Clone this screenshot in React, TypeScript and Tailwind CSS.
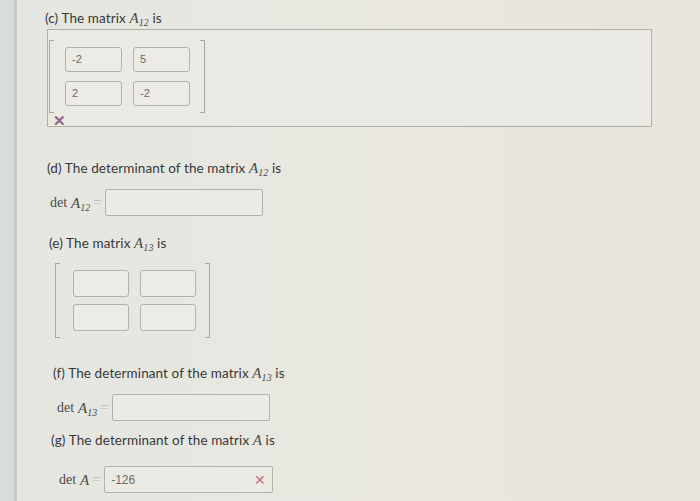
import type { ReactNode } from 'react';

const serif = { fontFamily: '"Liberation Serif", "DejaVu Serif", serif' };

function Sym({ sub }: { sub?: string }) {
  return (
    <span className="whitespace-nowrap" style={serif}>
      <span className="italic text-[15px] text-[#4a4a4a]">A</span>
      {sub && <span className="italic text-[10px] text-[#4a4a4a] relative top-[3px]">{sub}</span>}
    </span>
  );
}

function Prompt({ children, className }: { children: ReactNode; className?: string }) {
  return <div className={'text-[13.5px] leading-4 text-[#383838] tracking-[0.1px] ' + (className ?? '')}>{children}</div>;
}

function Cell({ value, w, h }: { value?: string; w: string; h: string }) {
  return (
    <div className={`${w} ${h} border border-[#b3b2aa] rounded-[3px] bg-[#ecebe5] flex items-center pl-[6px] text-[11px] text-[#6a6a6a]`}
      style={{ fontFamily: '"Liberation Sans", Arial, sans-serif' }}>
      {value}
    </div>
  );
}

function Matrix({ values, cellW, cellH, rowGap, padL, padR, padY }: {
  values: (string | undefined)[];
  cellW: string; cellH: string; rowGap: string; padL: string; padR: string; padY: string;
}) {
  return (
    <div className="flex">
      <div className="w-[5px] border-l border-y border-[#a9a8a1]" />
      <div className={`grid grid-cols-2 gap-x-[11px] ${rowGap} ${padL} ${padR} ${padY}`}>
        {values.map((v, i) => <Cell key={i} value={v} w={cellW} h={cellH} />)}
      </div>
      <div className="w-[5px] border-r border-y border-[#a9a8a1]" />
    </div>
  );
}

function DetRow({ sub, value, wrong, className, inputW, gap }: {
  sub?: string; value?: string; wrong?: boolean; className?: string; inputW: string; gap: string;
}) {
  return (
    <div className={'flex items-center ' + (className ?? '')}>
      <span className="text-[14px] text-[#4a4a4a]" style={serif}>det</span>
      <span className="ml-[4px]"><Sym sub={sub} /></span>
      <span className="ml-[3px] text-[14px] text-[#b9b8b0]" style={serif}>=</span>
      <div className={`${gap} ${inputW} h-[27px] border border-[#b3b2aa] rounded-[2px] bg-[#eceae4] flex items-center justify-between px-[6px] text-[12px] text-[#6a6a6a]`}
        style={{ fontFamily: '"Liberation Sans", Arial, sans-serif' }}>
        <span>{value}</span>
        {wrong && <span className="text-[#c0707c] text-[14px] leading-none">✕</span>}
      </div>
    </div>
  );
}

export default function App() {
  return (
    <div className="w-[700px] h-[501px] overflow-hidden flex bg-gradient-to-r from-[#e5e6e1] via-[#e9e8e1] to-[#e8e4dc]"
      style={{ fontFamily: 'Lato, "Open Sans", sans-serif' }}>
      <div className="w-[17px] shrink-0 bg-[#d7dcdc] border-r-[3px] border-[#c4cacb]" />
      <div className="flex-1 pl-[28px] pt-[10px]">
        <Prompt>(c) The matrix <Sym sub="12" /> is</Prompt>

        <div className="mt-[1px] ml-[2px] w-[605px] border border-[#b0afa8] pt-[10px] pl-[1px] bg-[#ebe9e3]">
          <Matrix values={['-2', '5', '2', '-2']} cellW="w-[57px]" cellH="h-[25px]" rowGap="gap-y-[9px]"
            padL="pl-[11px]" padR="pr-[10px]" padY="py-[7px]" />
          <div className="mt-[2px] ml-[4px] h-[11px] text-[15px] leading-[11px] font-bold text-[#8f6481]">✕</div>
        </div>

        <Prompt className="mt-[33px] ml-[2px]">(d) The determinant of the matrix <Sym sub="12" /> is</Prompt>
        <DetRow sub="12" className="mt-[11px] ml-[5px]" inputW="w-[158px]" gap="ml-[4px]" />

        <Prompt className="mt-[19px] ml-[4px]">(e) The matrix <Sym sub="13" /> is</Prompt>
        <div className="mt-[10px] ml-[10px]">
          <Matrix values={[undefined, undefined, undefined, undefined]} cellW="w-[56px]" cellH="h-[27px]"
            rowGap="gap-y-[7px]" padL="pl-[13px]" padR="pr-[9px]" padY="py-[7px]" />
        </div>

        <Prompt className="mt-[27px] ml-[8px]">(f) The determinant of the matrix <Sym sub="13" /> is</Prompt>
        <DetRow sub="13" className="mt-[11px] ml-[12px]" inputW="w-[158px]" gap="ml-[4px]" />

        <Prompt className="mt-[11px] ml-[6px]">(g) The determinant of the matrix <Sym /> is</Prompt>
        <DetRow value="-126" wrong className="mt-[17px] ml-[14px]" inputW="w-[169px]" gap="ml-[4px]" />
      </div>
    </div>
  );
}
